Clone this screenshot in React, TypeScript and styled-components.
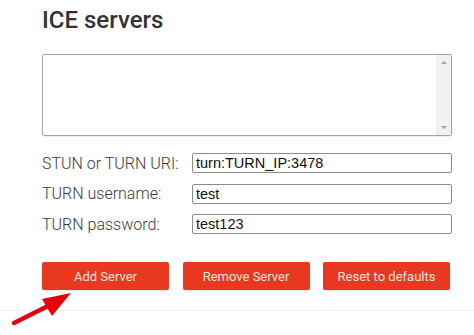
import React, { useState } from 'react';
import styled, { createGlobalStyle } from 'styled-components';

const GlobalStyle = createGlobalStyle`
  html, body {
    margin: 0;
    padding: 0;
    background: #ffffff;
  }
  body {
    font-family: Roboto, "Liberation Sans", Arial, sans-serif;
  }
`;

const Page = styled.div`
  position: relative;
  width: 474px;
  height: 335px;
  overflow: hidden;
  box-sizing: border-box;
  padding: 0 22px 0 42px;
`;

const Title = styled.h2`
  margin: 0;
  padding-top: 6px;
  font-size: 24px;
  line-height: 28px;
  font-weight: 500;
  color: #333333;
`;

const TextBox = styled.div`
  display: flex;
  box-sizing: border-box;
  width: 410px;
  height: 82px;
  margin-top: 20px;
  border: 1px solid #a3a3a3;
  border-radius: 2px;
  box-shadow: 0 1px 1px rgba(0, 0, 0, 0.08);
  overflow: hidden;
`;

const ServerList = styled.textarea`
  flex: 1;
  border: none;
  outline: none;
  resize: none;
  padding: 2px 4px;
  font-family: "Liberation Sans", Arial, sans-serif;
  font-size: 13px;
`;

const ScrollTrack = styled.div`
  width: 15px;
  background: #f1f1f1;
  display: flex;
  flex-direction: column;
  justify-content: space-between;
  align-items: center;
  padding: 6px 0;
`;

const ScrollArrow = styled.span<{ $down?: boolean }>`
  width: 0;
  height: 0;
  border-left: 3px solid transparent;
  border-right: 3px solid transparent;
  ${p => (p.$down ? 'border-top: 3px solid #a3a3a3;' : 'border-bottom: 3px solid #a3a3a3;')}
`;

const Form = styled.div`
  display: grid;
  grid-template-columns: 150px 260px;
  grid-auto-rows: 20px;
  row-gap: 10.5px;
  margin-top: 17px;
  align-items: center;
`;

const Label = styled.label`
  font-size: 16px;
  font-weight: 300;
  color: #3a3a3a;
  white-space: nowrap;
`;

const Field = styled.input`
  box-sizing: border-box;
  height: 20px;
  width: 100%;
  margin: 0;
  padding: 0 3px;
  border: 1px solid #8c8c8c;
  border-radius: 2px;
  font-family: "Liberation Sans", Arial, sans-serif;
  font-size: 14.5px;
  color: #111111;
  outline: none;
`;

const ButtonRow = styled.div`
  display: flex;
  gap: 13.5px;
  margin-top: 28px;
`;

const Button = styled.button`
  width: 127px;
  height: 28px;
  border: none;
  border-radius: 2px;
  background: #e8381f;
  color: #fde2dd;
  font-family: Roboto, "Liberation Sans", Arial, sans-serif;
  font-size: 13px;
  font-weight: 400;
  cursor: pointer;
  box-shadow: 0 1px 1px rgba(0, 0, 0, 0.1);
`;

const Divider = styled.div`
  height: 1px;
  margin: 20px -22px 0 -42px;
  background: #eeeeee;
`;

const Pointer = styled.svg`
  position: absolute;
  left: 0;
  top: 285px;
`;

export default function App() {
  const [uri, setUri] = useState('turn:TURN_IP:3478');
  const [user, setUser] = useState('test');
  const [pass, setPass] = useState('test123');

  return (
    <>
      <GlobalStyle />
      <Page>
        <Title>ICE servers</Title>
        <TextBox>
          <ServerList />
          <ScrollTrack>
            <ScrollArrow />
            <ScrollArrow $down />
          </ScrollTrack>
        </TextBox>
        <Form>
          <Label>STUN or TURN URI:</Label>
          <Field value={uri} onChange={e => setUri(e.target.value)} />
          <Label>TURN username:</Label>
          <Field value={user} onChange={e => setUser(e.target.value)} />
          <Label>TURN password:</Label>
          <Field value={pass} onChange={e => setPass(e.target.value)} />
        </Form>
        <ButtonRow>
          <Button>Add Server</Button>
          <Button>Remove Server</Button>
          <Button>Reset to defaults</Button>
        </ButtonRow>
        <Divider />
        <Pointer width="80" height="45" viewBox="0 0 80 45">
          <line x1="14" y1="38" x2="50" y2="20" stroke="#e5000f" strokeWidth="4.5" strokeLinecap="round" />
          <polygon points="71,8 42,14 52,31" fill="#e5000f" />
        </Pointer>
      </Page>
    </>
  );
}
